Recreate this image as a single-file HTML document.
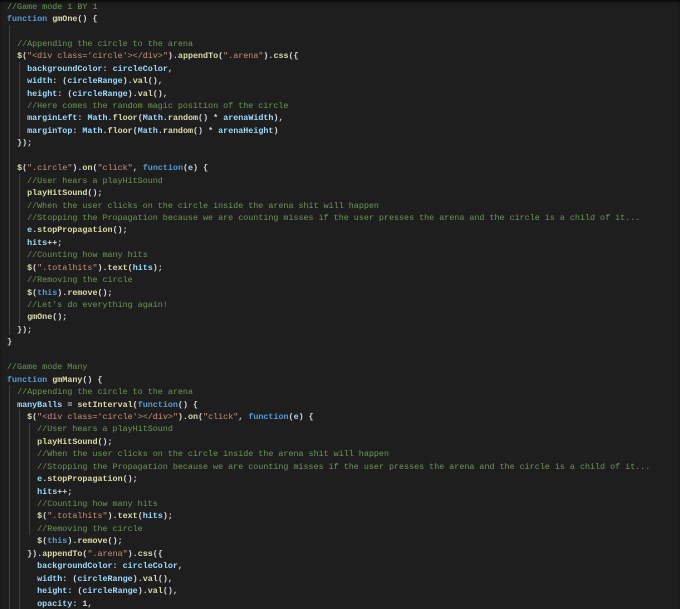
<!DOCTYPE html>
<html><head><meta charset="utf-8"><style>
html,body{margin:0;padding:0;background:#1e1e1e;width:680px;height:609px;overflow:hidden}
body{position:relative;box-shadow:inset 0 3px 4px -2px #000}
pre{position:absolute;left:7px;top:0.5px;margin:0;font-family:"Liberation Mono",monospace;font-size:8.4px;line-height:12.43px;font-weight:bold;color:#d4d4d4}
.c{color:#6a9955;font-weight:normal}.k{color:#569cd6}.f{color:#dcdcaa}.s{color:#ce9178;font-weight:normal}.v{color:#9cdcfe}
.g{position:absolute;width:1px;background:#404040}
</style></head><body>
<div class="g" style="left:9px;top:25px;height:310px"></div>
<div class="g" style="left:19px;top:174px;height:150px"></div>
<div class="g" style="left:19px;top:62px;height:75px"></div>
<div class="g" style="left:9px;top:385px;height:224px"></div>
<div class="g" style="left:19px;top:410px;height:199px"></div>
<div class="g" style="left:29px;top:423px;height:112px"></div>
<pre><span class="c">//Game mode 1 BY 1</span>
<span class="k">function</span> <span class="f">gmOne</span>() {

  <span class="c">//Appending the circle to the arena</span>
  <span class="f">$</span>(<span class="s">"&lt;div class='circle'&gt;&lt;/div&gt;"</span>).<span class="f">appendTo</span>(<span class="s">".arena"</span>).<span class="f">css</span>({
    <span class="v">backgroundColor</span>: <span class="v">circleColor</span>,
    <span class="v">width</span>: (<span class="v">circleRange</span>).<span class="f">val</span>(),
    <span class="v">height</span>: (<span class="v">circleRange</span>).<span class="f">val</span>(),
    <span class="c">//Here comes the random magic position of the circle</span>
    <span class="v">marginLeft</span>: <span class="v">Math</span>.<span class="f">floor</span>(<span class="v">Math</span>.<span class="f">random</span>() * <span class="v">arenaWidth</span>),
    <span class="v">marginTop</span>: <span class="v">Math</span>.<span class="f">floor</span>(<span class="v">Math</span>.<span class="f">random</span>() * <span class="v">arenaHeight</span>)
  });

  <span class="f">$</span>(<span class="s">".circle"</span>).<span class="f">on</span>(<span class="s">"click"</span>, <span class="k">function</span>(<span class="v">e</span>) {
    <span class="c">//User hears a playHitSound</span>
    <span class="f">playHitSound</span>();
    <span class="c">//When the user clicks on the circle inside the arena shit will happen</span>
    <span class="c">//Stopping the Propagation because we are counting misses if the user presses the arena and the circle is a child of it...</span>
    <span class="v">e</span>.<span class="f">stopPropagation</span>();
    <span class="v">hits</span>++;
    <span class="c">//Counting how many hits</span>
    <span class="f">$</span>(<span class="s">".totalhits"</span>).<span class="f">text</span>(<span class="v">hits</span>);
    <span class="c">//Removing the circle</span>
    <span class="f">$</span>(<span class="k">this</span>).<span class="f">remove</span>();
    <span class="c">//Let's do everything again!</span>
    <span class="f">gmOne</span>();
  });
}

<span class="c">//Game mode Many</span>
<span class="k">function</span> <span class="f">gmMany</span>() {
  <span class="c">//Appending the circle to the arena</span>
  <span class="v">manyBalls</span> = <span class="f">setInterval</span>(<span class="k">function</span>() {
    <span class="f">$</span>(<span class="s">"&lt;div class='circle'&gt;&lt;/div&gt;"</span>).<span class="f">on</span>(<span class="s">"click"</span>, <span class="k">function</span>(<span class="v">e</span>) {
      <span class="c">//User hears a playHitSound</span>
      <span class="f">playHitSound</span>();
      <span class="c">//When the user clicks on the circle inside the arena shit will happen</span>
      <span class="c">//Stopping the Propagation because we are counting misses if the user presses the arena and the circle is a child of it...</span>
      <span class="v">e</span>.<span class="f">stopPropagation</span>();
      <span class="v">hits</span>++;
      <span class="c">//Counting how many hits</span>
      <span class="f">$</span>(<span class="s">".totalhits"</span>).<span class="f">text</span>(<span class="v">hits</span>);
      <span class="c">//Removing the circle</span>
      <span class="f">$</span>(<span class="k">this</span>).<span class="f">remove</span>();
    }).<span class="f">appendTo</span>(<span class="s">".arena"</span>).<span class="f">css</span>({
      <span class="v">backgroundColor</span>: <span class="v">circleColor</span>,
      <span class="v">width</span>: (<span class="v">circleRange</span>).<span class="f">val</span>(),
      <span class="v">height</span>: (<span class="v">circleRange</span>).<span class="f">val</span>(),
      <span class="v">opacity</span>: 1,
</pre>
</body></html>
